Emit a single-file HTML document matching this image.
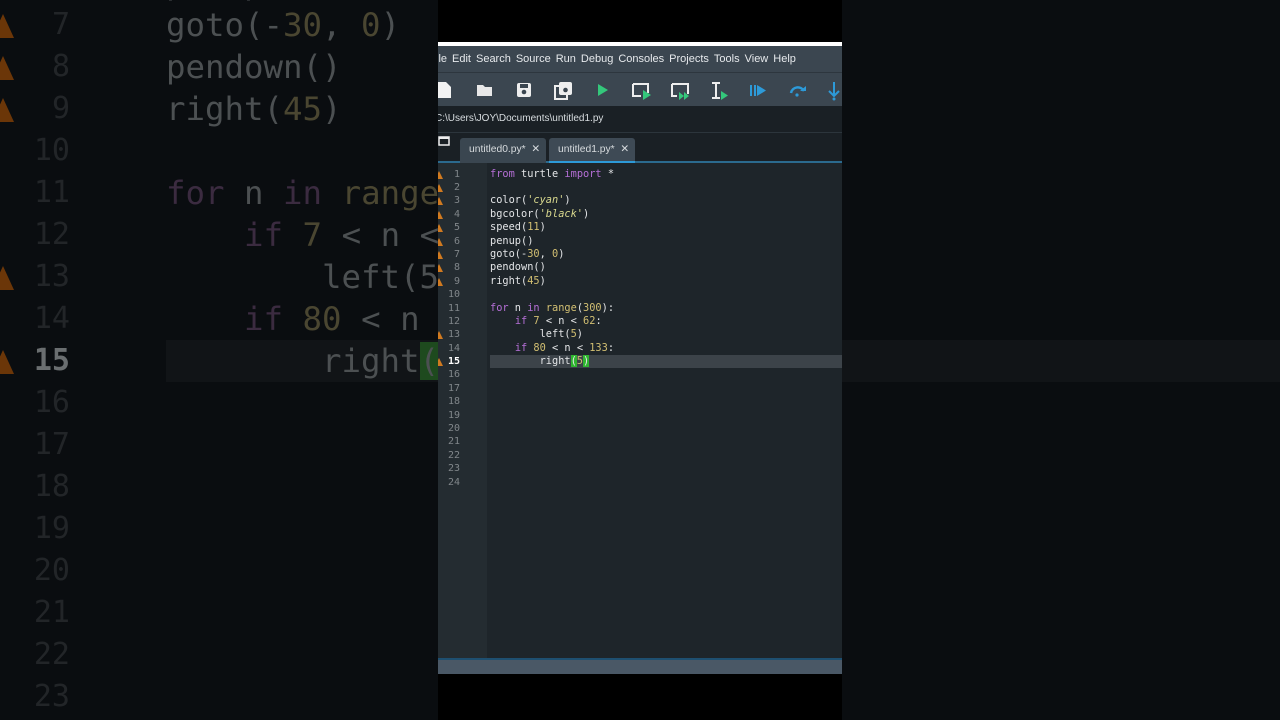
<!DOCTYPE html>
<html><head><meta charset="utf-8"><style>
*{margin:0;padding:0;box-sizing:border-box}
body{width:1280px;height:720px;background:#000;overflow:hidden;position:relative;font-family:"Liberation Sans",sans-serif}
.bg{position:absolute;top:0;height:720px;background:#0a0d10;overflow:hidden}
.bgcode{position:absolute;left:0;top:-248px;width:1280px;font-family:"DejaVu Sans Mono",monospace;font-size:32.4px;line-height:42px;color:#4c5052}
.bgcode .r{height:42px;position:relative}
.bgcode .n{position:absolute;right:1210px;color:#222528;font-size:30px}
.bgcode .c{position:absolute;left:166px;white-space:pre}
.bgcode .t{position:absolute;left:-8px;top:10px;width:0;height:0;border-left:11px solid transparent;border-right:11px solid transparent;border-bottom:24px solid #6b3608}
.bk{color:#3b2b40}.bn{color:#4a4631}
.ide{position:absolute;left:438px;top:42px;width:404px;height:632px;background:#1e252a;overflow:hidden}
.top{height:4px;background:#fff}
.menu{height:26px;background:#3b4650;color:#e6e9ec;font-size:11px;line-height:26px;white-space:nowrap;margin-left:-2px}
.menu span{margin-right:5px}
.tb{height:34px;background:#3b4650;border-top:1px solid #2d363e;position:relative}
.tb svg{position:absolute;top:8px}
.path{height:27px;background:#1a2025;color:#d8dde0;font-size:10px;line-height:25px;border-bottom:1px solid #2c353c;white-space:nowrap;margin-left:-3px}
.tabs{height:30px;background:#1a2025;position:relative;border-bottom:2px solid #2b6a8e}
.tab{position:absolute;top:5px;height:25px;font-size:10.3px;color:#d6dadd;line-height:24px;padding-left:9px;border-radius:3px 3px 0 0}
.ed{position:absolute;left:0;top:121px;width:404px;height:495px}
.gut{position:absolute;left:0;top:0;width:49px;height:495px;background:#242c31}
.code{position:absolute;left:0;top:4.6px;width:404px;font-family:"DejaVu Sans Mono",monospace;font-size:10.3px;line-height:13.4px;color:#e2e4e6}
.code .r{height:13.4px;position:relative}
.code .n{position:absolute;right:382px;color:#80868a;font-size:10px}
.code .c{position:absolute;left:52px;white-space:pre}
.code .t{position:absolute;left:-3px;top:3px;width:0;height:0;border-left:4px solid transparent;border-right:4px solid transparent;border-bottom:8px solid #d07a20}
.k{color:#b56fd6}.s{color:#d9d98e;font-style:italic}.d{color:#d2bf72}
.st{position:absolute;left:0;top:616px;width:404px;height:16px;background:#4a5866;border-top:2px solid #1e4f70}
</style></head><body>
<div class="bg" style="left:0;width:438px">
<div class="bgcode"><div class="r"><span class="n">1</span></div><div class="r"></div><div class="r"></div><div class="r"></div><div class="r"></div><div class="r"><span class="t"></span><span class="n">6</span><span class="c">penup()</span></div><div class="r"><span class="t"></span><span class="n">7</span><span class="c">goto(-<span class="bn">30</span>, <span class="bn">0</span>)</span></div><div class="r"><span class="t"></span><span class="n">8</span><span class="c">pendown()</span></div><div class="r"><span class="t"></span><span class="n">9</span><span class="c">right(<span class="bn">45</span>)</span></div><div class="r"><span class="n">10</span></div><div class="r"><span class="n">11</span><span class="c"><span class="bk">for</span> n <span class="bk">in</span> <span class="bn">range</span>(300):</span></div><div class="r"><span class="n">12</span><span class="c">    <span class="bk">if</span> <span class="bn">7</span> &lt; n &lt; 62:</span></div><div class="r"><span class="t"></span><span class="n">13</span><span class="c">        left(5)</span></div><div class="r"><span class="n">14</span><span class="c">    <span class="bk">if</span> <span class="bn">80</span> &lt; n &lt; 133:</span></div><div class="r" style="background:linear-gradient(90deg,transparent 166px,#111417 166px)"><span class="t"></span><span class="n" style="color:#6a6e70;font-weight:bold">15</span><span class="c">        right<span style="background:#1e4a1e">(5)</span></span></div><div class="r"><span class="n">16</span></div><div class="r"><span class="n">17</span></div><div class="r"><span class="n">18</span></div><div class="r"><span class="n">19</span></div><div class="r"><span class="n">20</span></div><div class="r"><span class="n">21</span></div><div class="r"><span class="n">22</span></div><div class="r"><span class="n">23</span></div></div></div>
<div class="bg" style="left:842px;width:438px"><div style="position:absolute;left:0;top:340px;width:438px;height:42px;background:#111417"></div></div>

<div class="ide">
<div class="top"></div>
<div class="menu"><span>ile</span><span>Edit</span><span>Search</span><span>Source</span><span>Run</span><span>Debug</span><span>Consoles</span><span>Projects</span><span>Tools</span><span>View</span><span>Help</span></div>
<div class="tb">
<svg style="left:0" width="16" height="18"><path d="M0 1h8l5 5v11H0z" fill="#f2f2f2"/></svg>
<svg style="left:38px" width="18" height="18"><path d="M1 4h6l2 2h7v9H1z" fill="#e8e8e8"/></svg>
<svg style="left:77px" width="18" height="18"><rect x="2" y="2" width="14" height="14" rx="2" fill="#eee"/><rect x="5" y="3" width="8" height="4" fill="#3b4650"/><circle cx="9" cy="11" r="2.3" fill="#3b4650"/></svg>
<svg style="left:115px" width="20" height="20"><rect x="2" y="5" width="12" height="13" fill="none" stroke="#eee" stroke-width="2"/><rect x="6" y="1" width="13" height="13" rx="2" fill="#eee"/><circle cx="12.5" cy="9" r="2.3" fill="#3b4650"/></svg>
<svg style="left:158px" width="14" height="18"><path d="M2 3l10 6-10 6z" fill="#34c77b"/></svg>
<svg style="left:193px" width="22" height="20"><path d="M2 3h15v9" fill="none" stroke="#eee" stroke-width="2"/><path d="M2 3v12h8" fill="none" stroke="#eee" stroke-width="2"/><path d="M12 9l8 5-8 5z" fill="#34c77b"/></svg>
<svg style="left:232px" width="22" height="20"><path d="M2 3h16v10M2 3v12h5" fill="none" stroke="#eee" stroke-width="2"/><path d="M9 11l5 4-5 4zM14 11l5 4-5 4z" fill="#34c77b"/></svg>
<svg style="left:272px" width="20" height="20"><path d="M2 2h8M6 2v15M2 17h8" fill="none" stroke="#eee" stroke-width="2"/><path d="M11 10l7 4.5-7 4.5z" fill="#34c77b"/></svg>
<svg style="left:310px" width="20" height="20"><rect x="2" y="4" width="2" height="11" fill="#2d9ad8"/><rect x="6" y="4" width="2" height="11" fill="#2d9ad8"/><path d="M9 4l9 5.5-9 5.5z" fill="#2d9ad8"/></svg>
<svg style="left:350px" width="20" height="20"><path d="M3 12a7 7 0 0 1 13-2" fill="none" stroke="#2d9ad8" stroke-width="2.5"/><path d="M12 10h6v-5z" fill="#2d9ad8"/><circle cx="9" cy="14" r="1.6" fill="#2d9ad8"/></svg>
<svg style="left:389px" width="16" height="20"><path d="M7 1v14M2 10l5 5 5-5" fill="none" stroke="#2d9ad8" stroke-width="2"/><circle cx="7" cy="18" r="1.5" fill="#2d9ad8"/></svg>
</div>
<div class="path">C:\Users\JOY\Documents\untitled1.py</div>
<div class="tabs">
<svg style="position:absolute;left:0;top:3px" width="12" height="10"><rect x="1" y="1" width="10" height="8" fill="none" stroke="#eee" stroke-width="1.5"/><rect x="1" y="1" width="10" height="2" fill="#eee"/></svg>
<div class="tab" style="left:22px;width:86px;background:#3a4650">untitled0.py* &nbsp;✕</div>
<div class="tab" style="left:111px;width:86px;background:#3e4a55;border-bottom:2px solid #2d9ad8">untitled1.py* &nbsp;✕</div>
</div>
<div class="ed"><div class="gut"></div>
<div class="code"><div class="r"><span class="t"></span><span class="n">1</span><span class="c"><span class="k">from</span> turtle <span class="k">import</span> *</span></div><div class="r"><span class="t"></span><span class="n">2</span></div><div class="r"><span class="t"></span><span class="n">3</span><span class="c">color(<span class="s">'cyan'</span>)</span></div><div class="r"><span class="t"></span><span class="n">4</span><span class="c">bgcolor(<span class="s">'black'</span>)</span></div><div class="r"><span class="t"></span><span class="n">5</span><span class="c">speed(<span class="d">11</span>)</span></div><div class="r"><span class="t"></span><span class="n">6</span><span class="c">penup()</span></div><div class="r"><span class="t"></span><span class="n">7</span><span class="c">goto(-<span class="d">30</span>, <span class="d">0</span>)</span></div><div class="r"><span class="t"></span><span class="n">8</span><span class="c">pendown()</span></div><div class="r"><span class="t"></span><span class="n">9</span><span class="c">right(<span class="d">45</span>)</span></div><div class="r"><span class="n">10</span></div><div class="r"><span class="n">11</span><span class="c"><span class="k">for</span> n <span class="k">in</span> <span class="d">range</span>(<span class="d">300</span>):</span></div><div class="r"><span class="n">12</span><span class="c">    <span class="k">if</span> <span class="d">7</span> &lt; n &lt; <span class="d">62</span>:</span></div><div class="r"><span class="t"></span><span class="n">13</span><span class="c">        left(<span class="d">5</span>)</span></div><div class="r"><span class="n">14</span><span class="c">    <span class="k">if</span> <span class="d">80</span> &lt; n &lt; <span class="d">133</span>:</span></div><div class="r" style="background:linear-gradient(90deg,transparent 52px,#3c4349 52px)"><span class="t"></span><span class="n" style="color:#fff;font-weight:bold">15</span><span class="c">        right<span style="background:#2fb52f">(</span><span class="d">5</span><span style="background:#2fb52f">)</span></span></div><div class="r"><span class="n">16</span></div><div class="r"><span class="n">17</span></div><div class="r"><span class="n">18</span></div><div class="r"><span class="n">19</span></div><div class="r"><span class="n">20</span></div><div class="r"><span class="n">21</span></div><div class="r"><span class="n">22</span></div><div class="r"><span class="n">23</span></div><div class="r"><span class="n">24</span></div></div></div>
<div class="st"></div>
</div>
</body></html>
